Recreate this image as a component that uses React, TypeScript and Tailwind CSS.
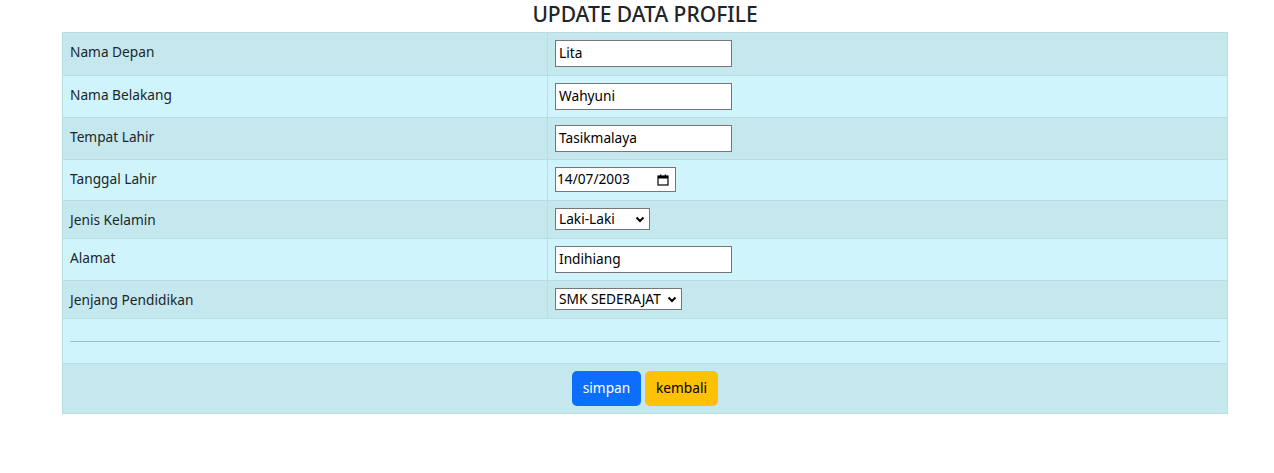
import React from "react";

const font = { fontFamily: '"Segoe UI", "Noto Sans", "Open Sans", sans-serif' };

function TextBox({ value }: { value: string }) {
  return (
    <div className="flex h-[27px] w-[177px] items-center border border-[#767676] bg-white px-[3px] text-[13.7px] text-black">
      {value}
    </div>
  );
}

function SelectBox({ value, w }: { value: string; w: string }) {
  return (
    <div className={`flex h-[22px] ${w} items-center justify-between border border-[#767676] bg-white pl-[3px] pr-[4px] text-[13.7px] text-black`}>
      <span>{value}</span>
      <svg width="10" height="7" viewBox="0 0 10 7">
        <path d="M1.5 1.5 L5 5 L8.5 1.5" fill="none" stroke="#000" strokeWidth="2" />
      </svg>
    </div>
  );
}

function DateBox() {
  return (
    <div className="flex h-[25px] w-[121px] items-center justify-between border border-[#767676] bg-white pl-[1px] pr-[6px] text-[13.7px] text-black">
      <span>14/07/2003</span>
      <svg width="12" height="12" viewBox="0 0 12 12">
        <rect x="1" y="2" width="10" height="9" fill="none" stroke="#000" strokeWidth="1.2" />
        <rect x="1" y="2" width="10" height="2.5" fill="#000" />
        <rect x="3" y="0.5" width="1.2" height="2" fill="#000" />
        <rect x="7.8" y="0.5" width="1.2" height="2" fill="#000" />
      </svg>
    </div>
  );
}

type Row = { label: string; control: React.ReactNode; h: string };

export default function App() {
  const rows: Row[] = [
    { label: "Nama Depan", control: <TextBox value="Lita" />, h: "h-[43px]" },
    { label: "Nama Belakang", control: <TextBox value="Wahyuni" />, h: "h-[42px]" },
    { label: "Tempat Lahir", control: <TextBox value="Tasikmalaya" />, h: "h-[42px]" },
    { label: "Tanggal Lahir", control: <DateBox />, h: "h-[41px]" },
    { label: "Jenis Kelamin", control: <SelectBox value="Laki-Laki" w="w-[95px]" />, h: "h-[38px]" },
    { label: "Alamat", control: <TextBox value="Indihiang" />, h: "h-[42px]" },
    { label: "Jenjang Pendidikan", control: <SelectBox value="SMK SEDERAJAT" w="w-[127px]" />, h: "h-[38px]" },
  ];
  return (
    <div className="min-h-[473px] bg-white text-[#212529]" style={font}>
      <div className="flex h-[32px] items-start justify-center pl-[16px]">
        <h5 className="text-[21px] font-medium leading-[28px] text-[#212529]">UPDATE DATA PROFILE</h5>
      </div>
      <div className="ml-[62px] w-[1166px] border border-[#badce3] text-[13.7px]">
        {rows.map((r, i) => (
          <div
            key={r.label}
            className={`flex ${r.h} border-b border-[#badce3] ${i % 2 === 0 ? "bg-[#c5e8ef]" : "bg-[#cff4fc]"}`}
          >
            <div className="w-[485px] border-r border-[#badce3] px-[7px] pt-[8px] leading-[21px]">{r.label}</div>
            <div className="flex-1 px-[7px] pt-[7px]">{r.control}</div>
          </div>
        ))}
        <div className="flex h-[45px] items-center border-b border-[#badce3] bg-[#cff4fc] px-[7px]">
          <div className="mt-[1px] h-px w-full bg-[#9fbcc2]" />
        </div>
        <div className="flex h-[49px] items-start justify-center gap-[4px] bg-[#c5e8ef] pt-[7px]">
          <button className="h-[35px] w-[69px] rounded-[5px] bg-[#0d6efd] text-[13.7px] text-white">simpan</button>
          <button className="h-[35px] w-[73px] rounded-[5px] bg-[#ffc107] text-[13.7px] text-black">kembali</button>
        </div>
      </div>
    </div>
  );
}
